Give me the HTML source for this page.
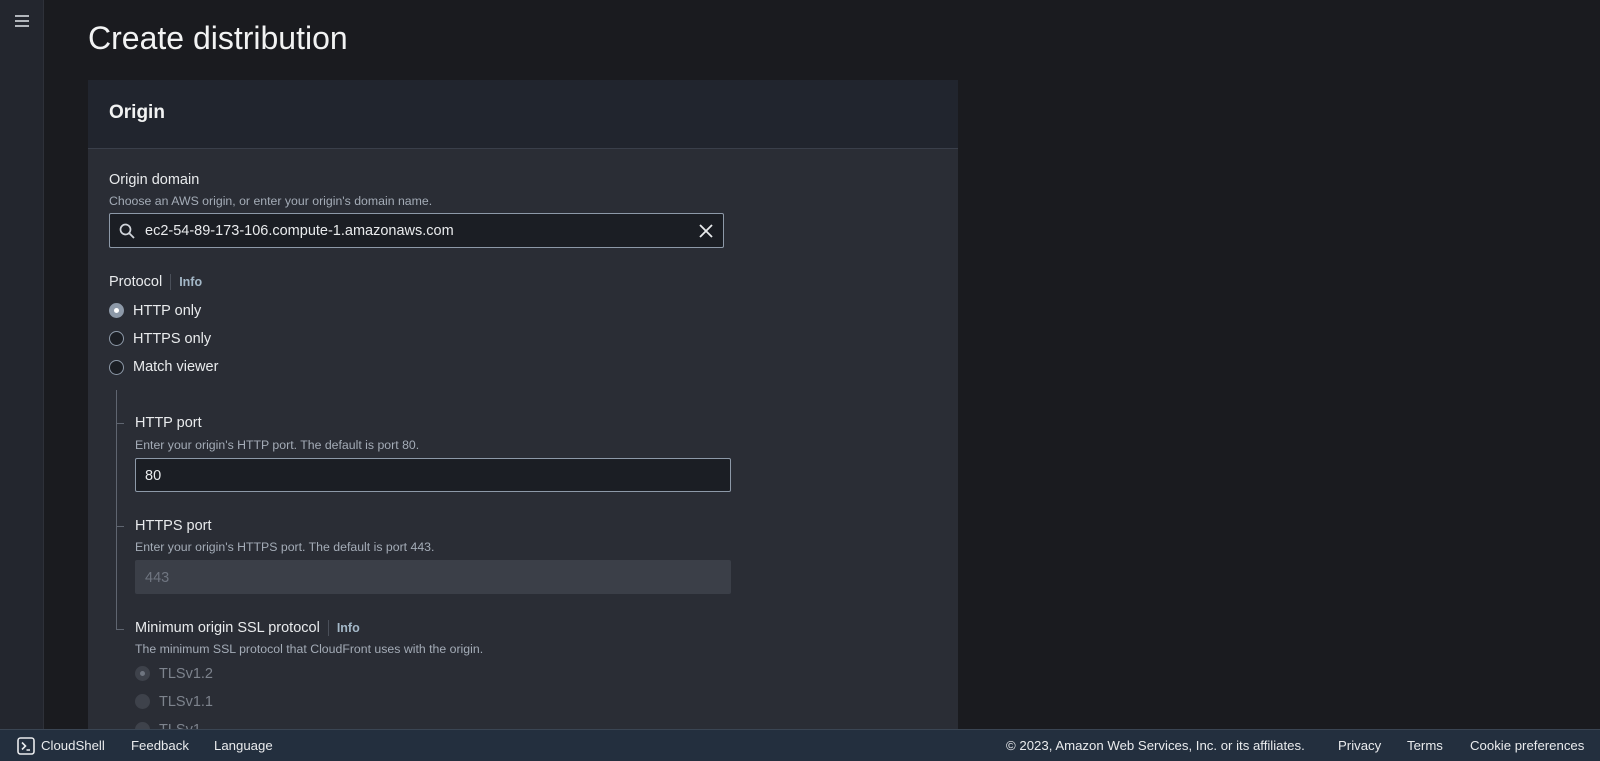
<!DOCTYPE html>
<html><head><meta charset="utf-8"><style>
*{box-sizing:border-box;margin:0;padding:0}
body{width:1600px;height:761px;overflow:hidden;background:#1a1b1f;font-family:"Liberation Sans",sans-serif;color:#d1d5db;position:relative}
.side{position:absolute;left:0;top:0;width:44px;height:761px;background:#23262e;border-right:1px solid #2e3139}
.t{position:absolute;white-space:nowrap}
.panel{position:absolute;left:88px;top:80px;width:870px;height:660px;background:#2a2d35}
.ph{position:absolute;left:0;top:0;width:870px;height:69px;background:#21252e;border-bottom:1px solid #3a3f4a}
.lbl{font-size:14.5px;color:#e9ebed}
.desc{font-size:12.3px;color:#a4acb7}
.inp{position:absolute;background:#1b1e24;border:1px solid #8d99a8;border-radius:2px}
.radio{position:absolute;width:15px;height:15px;border-radius:50%;border:1.5px solid #8d99a8;background:#1b1e24}
.info{font-size:12.5px;font-weight:bold;color:#a4b8c8}
.sep{display:inline-block;width:1px;height:16px;background:#4a4f59;vertical-align:middle;margin:0 8px}
.foot{position:absolute;left:0;top:729px;width:1600px;height:32px;background:#232f3e;border-top:1px solid #3a4553;font-size:13.2px;color:#e9ebed}
</style></head><body>
<div class="side">
<svg style="position:absolute;left:14px;top:14px" width="16" height="14"><path d="M1 2H15M1 7H15M1 12H15" stroke="#c6cbd1" stroke-width="1.8"/></svg>
</div>
<div class="t" style="left:88px;top:20px;font-size:32px;color:#f2f3f3">Create distribution</div>
<div class="panel">
<div class="ph"><div class="t" style="left:21px;top:22px;font-size:19px;font-weight:bold;color:#f2f3f3">Origin</div></div>
</div>
<div class="t lbl" style="left:109px;top:172px">Origin domain</div>
<div class="t desc" style="left:109px;top:194px">Choose an AWS origin, or enter your origin's domain name.</div>
<div class="inp" style="left:109px;top:213px;width:615px;height:35px">
<svg style="position:absolute;left:9px;top:9px" width="16" height="16"><circle cx="6.5" cy="6.5" r="5" fill="none" stroke="#d1d5db" stroke-width="1.7"/><path d="M10 10L15 15" stroke="#d1d5db" stroke-width="1.8"/></svg>
<div class="t" style="left:35px;top:9px;font-size:14.5px;color:#e9ebed">ec2-54-89-173-106.compute-1.amazonaws.com</div>
<svg style="position:absolute;right:9px;top:9px" width="16" height="16"><path d="M2 2L14 14M14 2L2 14" stroke="#e9ebed" stroke-width="1.8"/></svg>
</div>
<div class="t lbl" style="left:109px;top:274px">Protocol<span class="sep"></span><span class="info">Info</span></div>
<div class="radio" style="left:109px;top:303px;background:#8d99a8;border-color:#8d99a8"><div style="position:absolute;left:3.5px;top:3.5px;width:5px;height:5px;border-radius:50%;background:#fff"></div></div>
<div class="t lbl" style="left:133px;top:303px">HTTP only</div>
<div class="radio" style="left:109px;top:331px"></div>
<div class="t lbl" style="left:133px;top:331px">HTTPS only</div>
<div class="radio" style="left:109px;top:360px"></div>
<div class="t lbl" style="left:133px;top:359px">Match viewer</div>
<div style="position:absolute;left:116px;top:390px;width:1px;height:240px;background:#5f6570"></div>
<div style="position:absolute;left:116px;top:423px;width:8px;height:1px;background:#5f6570"></div>
<div style="position:absolute;left:116px;top:526px;width:8px;height:1px;background:#5f6570"></div>
<div style="position:absolute;left:116px;top:629px;width:8px;height:1px;background:#5f6570"></div>
<div class="t lbl" style="left:135px;top:415px">HTTP port</div>
<div class="t desc" style="left:135px;top:438px">Enter your origin's HTTP port. The default is port 80.</div>
<div class="inp" style="left:135px;top:458px;width:596px;height:34px"><div class="t" style="left:9px;top:9px;font-size:14.5px;color:#e9ebed">80</div></div>
<div class="t lbl" style="left:135px;top:518px">HTTPS port</div>
<div class="t desc" style="left:135px;top:540px">Enter your origin's HTTPS port. The default is port 443.</div>
<div class="inp" style="left:135px;top:560px;width:596px;height:34px;background:#3b3f48;border-color:#3b3f48"><div class="t" style="left:9px;top:9px;font-size:14.5px;color:#6f7580">443</div></div>
<div class="t lbl" style="left:135px;top:620px">Minimum origin SSL protocol<span class="sep"></span><span class="info">Info</span></div>
<div class="t desc" style="left:135px;top:642px">The minimum SSL protocol that CloudFront uses with the origin.</div>
<div class="radio" style="left:135px;top:666px;background:#3e424b;border-color:#3e424b"><div style="position:absolute;left:3.5px;top:3.5px;width:5px;height:5px;border-radius:50%;background:#6f7580"></div></div>
<div class="t lbl" style="left:159px;top:666px;color:#7d838d">TLSv1.2</div>
<div class="radio" style="left:135px;top:694px;background:#3e424b;border-color:#3e424b"></div>
<div class="t lbl" style="left:159px;top:694px;color:#7d838d">TLSv1.1</div>
<div class="radio" style="left:135px;top:722px;background:#3e424b;border-color:#3e424b"></div>
<div class="t lbl" style="left:159px;top:722px;color:#7d838d">TLSv1</div>
<div class="foot">
<svg style="position:absolute;left:17px;top:7px" width="18" height="18"><rect x="1" y="1" width="16" height="16" rx="2.5" fill="none" stroke="#e9ebed" stroke-width="1.6"/><path d="M5 5.5L8.5 9L5 12.5M9.5 13H13" fill="none" stroke="#e9ebed" stroke-width="1.6"/></svg>
<div class="t" style="left:41px;top:8px">CloudShell</div>
<div class="t" style="left:131px;top:8px">Feedback</div>
<div class="t" style="left:214px;top:8px">Language</div>
<div class="t" style="left:1006px;top:8px">© 2023, Amazon Web Services, Inc. or its affiliates.</div>
<div class="t" style="left:1338px;top:8px">Privacy</div>
<div class="t" style="left:1407px;top:8px">Terms</div>
<div class="t" style="left:1470px;top:8px">Cookie preferences</div>
</div>
</body></html>
